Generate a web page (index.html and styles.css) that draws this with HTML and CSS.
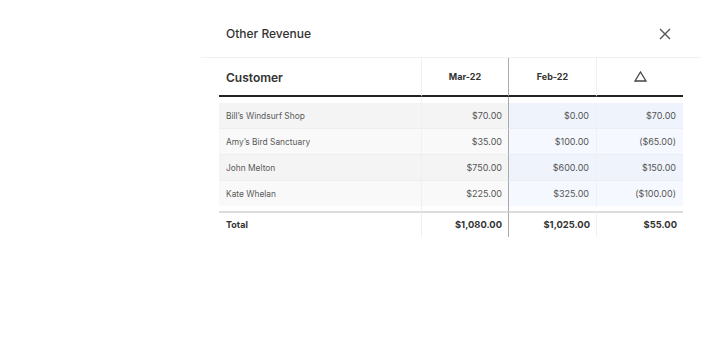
FILE: index.html
```html
<!DOCTYPE html>
<html>
<head>
<meta charset="utf-8">
<link rel="stylesheet" href="styles.css">
</head>
<body>
<div class="panel">
  <div class="titlebar">
    <span class="title">Other Revenue</span>
    <span class="close"><svg width="12" height="12" viewBox="0 0 12 12"><path d="M1 1 L11 11 M11 1 L1 11" stroke="#555" stroke-width="1.4" fill="none"/></svg></span>
  </div>
  <table class="grid">
    <colgroup><col class="w-name"><col class="w-num"><col class="w-feb"><col class="w-num"></colgroup>
    <thead>
      <tr>
        <th class="name">Customer</th>
        <th class="lt">Mar-22</th>
        <th class="dk">Feb-22</th>
        <th class="lt"><svg width="13" height="11" viewBox="0 0 13 11"><path d="M6.5 1 L12 10 L1 10 Z" stroke="#444" stroke-width="1.3" fill="none" stroke-linejoin="miter"/></svg></th>
      </tr>
    </thead>
    <tbody>
      <tr class="spacer"><td></td><td class="lt"></td><td class="dk"></td><td></td></tr>
      <tr class="odd sep"><td class="txt g">Bill’s Windsurf Shop</td><td class="num g lt">$70.00</td><td class="num b dk">$0.00</td><td class="num b lt">$70.00</td></tr>
      <tr class="even sep"><td class="txt g">Amy’s Bird Sanctuary</td><td class="num g lt">$35.00</td><td class="num b dk">$100.00</td><td class="num b lt">($65.00)</td></tr>
      <tr class="odd sep"><td class="txt g">John Melton</td><td class="num g lt">$750.00</td><td class="num b dk">$600.00</td><td class="num b lt">$150.00</td></tr>
      <tr class="even"><td class="txt g">Kate Whelan</td><td class="num g lt">$225.00</td><td class="num b dk">$325.00</td><td class="num b lt">($100.00)</td></tr>
      <tr class="spacer2"><td></td><td class="lt"></td><td class="dk"></td><td></td></tr>
    </tbody>
    <tfoot>
      <tr class="total"><td class="txt">Total</td><td class="num lt">$1,080.00</td><td class="num dk">$1,025.00</td><td class="num lt">$55.00</td></tr>
    </tfoot>
  </table>
</div>
</body>
</html>
```
FILE: styles.css
```css
body {
  margin: 0;
  background: #fff;
  font-family: Inter, "Liberation Sans", sans-serif;
  color: #333;
}
.panel {
  margin-left: 201px;
  width: 500px;
}
.titlebar {
  height: 58px;
  box-sizing: border-box;
  border-bottom: 1px solid #f0f1f3;
  display: flex;
  align-items: center;
  justify-content: space-between;
  padding: 9px 30px 0 25px;
}
.title {
  font-size: 12px;
  font-weight: 500;
  color: #333;
}
.close {
  display: flex;
  margin-top: 2px;
}
.grid {
  margin-left: 18px;
  width: 464px;
  table-layout: fixed;
  border-collapse: separate;
  border-spacing: 0;
}
.w-name { width: 202px; }
.w-num { width: 87px; }
.w-feb { width: 88px; }
th, td {
  padding: 0;
  box-sizing: border-box;
}
th {
  height: 39px;
  font-size: 9px;
  font-weight: 700;
  color: #333;
  text-align: center;
  vertical-align: middle;
  border-bottom: 2px solid #222;
}
th svg { display: block; margin: 0 auto; }
th.name {
  text-align: left;
  padding-left: 7px;
  padding-top: 1px;
  font-size: 12px;
  font-weight: 600;
  color: #333;
}
.lt { border-left: 1px solid #eef0f3; }
.dk { border-left: 1px solid #a9a9a9; }
.spacer td { height: 6px; }
.spacer2 td { height: 5px; }
tbody tr.odd td, tbody tr.even td {
  height: 25px;
  font-size: 9px;
  color: #555;
  vertical-align: middle;
}
tbody tr.odd td.txt, tbody tr.even td.txt {
  font-size: 8.4px;
  color: #5a5a5a;
}
tbody tr.sep td { height: 26px; border-bottom: 1px solid #eceef3; }
.txt { padding-left: 7px; text-align: left; }
.num { padding-right: 6px; text-align: right; }
.b.num { padding-right: 7px; }
tr.odd .g { background: #f4f4f4; }
tr.even .g { background: #f9f9f9; }
tr.odd .b { background: #eef3fc; }
tr.even .b { background: #f5f8fe; }
.total td {
  height: 26px;
  border-top: 2px solid #dcdcdc;
  font-size: 9.4px;
  font-weight: 700;
  color: #333;
  vertical-align: middle;
  padding-bottom: 1px;
}
.total td.txt { font-size: 9px; }
.total .dk { border-left-color: #a9a9a9; }
```
